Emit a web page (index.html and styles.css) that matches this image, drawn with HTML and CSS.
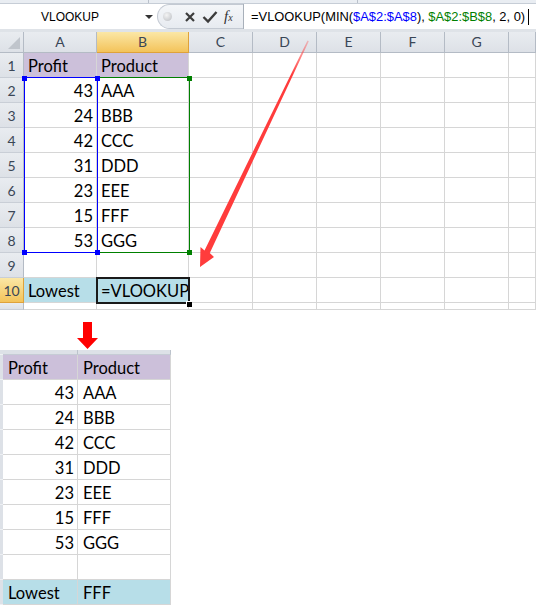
FILE: index.html
```html
<!DOCTYPE html>
<html lang="en">
<head>
    <meta charset="UTF-8">
    <meta name="viewport" content="width=device-width, initial-scale=1.0">
    <title>VLOOKUP lowest value</title>
    <link rel="stylesheet" href="styles.css">
</head>
<body>
    <div class="shot-top">
        <div class="ribbon-edge">
            <div class="rib rib1"></div>
            <div class="rib rib2"></div>
        </div>
        <div class="formula-bar">
            <div class="name-box">
                <span class="name">VLOOKUP</span>
                <span class="caret"></span>
            </div>
            <div class="fx-buttons">
                <span class="dot"></span>
                <svg class="btn" width="14" height="14" viewBox="0 0 14 14"><path d="M3 3 L11 11 M11 3 L3 11" stroke="#3c3c3c" stroke-width="2.2" fill="none"/></svg>
                <svg class="btn" width="16" height="14" viewBox="0 0 16 14"><path d="M1.5 7 L6 11.5 L14.5 2" stroke="#3c3c3c" stroke-width="2.4" fill="none"/></svg>
                <span class="fx"><i>f</i><small>x</small></span>
            </div>
            <div class="formula">=VLOOKUP(MIN(<span class="ref-a">$A$2:$A$8</span>), <span class="ref-b">$A$2:$B$8</span>, 2, 0)<span class="cursor"></span></div>
        </div>
        <div class="bar-gap"></div>

        <div class="grid">
            <div class="ch corner"><span class="tri"></span></div><div class="ch">A</div><div class="ch sel">B</div><div class="ch">C</div><div class="ch">D</div><div class="ch">E</div><div class="ch">F</div><div class="ch">G</div><div class="ch"></div>

            <div class="rh">1</div><div class="hd">Profit</div><div class="hd">Product</div><div></div><div></div><div></div><div></div><div></div><div></div>
            <div class="rh">2</div><div class="num">43</div><div>AAA</div><div></div><div></div><div></div><div></div><div></div><div></div>
            <div class="rh">3</div><div class="num">24</div><div>BBB</div><div></div><div></div><div></div><div></div><div></div><div></div>
            <div class="rh">4</div><div class="num">42</div><div>CCC</div><div></div><div></div><div></div><div></div><div></div><div></div>
            <div class="rh">5</div><div class="num">31</div><div>DDD</div><div></div><div></div><div></div><div></div><div></div><div></div>
            <div class="rh">6</div><div class="num">23</div><div>EEE</div><div></div><div></div><div></div><div></div><div></div><div></div>
            <div class="rh">7</div><div class="num">15</div><div>FFF</div><div></div><div></div><div></div><div></div><div></div><div></div>
            <div class="rh">8</div><div class="num">53</div><div>GGG</div><div></div><div></div><div></div><div></div><div></div><div></div>
            <div class="rh">9</div><div></div><div></div><div></div><div></div><div></div><div></div><div></div><div></div>
            <div class="rh sel">10</div><div class="lo">Lowest</div><div class="lo">=VLOOKUP</div><div></div><div></div><div></div><div></div><div></div><div></div>
            <div class="rh"></div><div></div><div></div><div></div><div></div><div></div><div></div><div></div><div></div>

            <!-- range highlights of the formula being edited -->
            <span class="range range-b"></span>
            <span class="range range-a"></span>
            <span class="knob green" style="left: 187px; top: 44px;"></span>
            <span class="knob green" style="left: 187px; top: 218px;"></span>
            <span class="knob blue" style="left: 22px; top: 44px;"></span>
            <span class="knob blue" style="left: 95px; top: 44px;"></span>
            <span class="knob blue" style="left: 22px; top: 218px;"></span>
            <span class="knob blue" style="left: 95px; top: 218px;"></span>
            <span class="active-cell"></span>
            <span class="fill-handle"></span>
        </div>

        <svg class="pointer" width="536" height="310" viewBox="0 0 536 310">
            <defs>
                <linearGradient id="fade" x1="308" y1="41" x2="200" y2="267" gradientUnits="userSpaceOnUse">
                    <stop offset="0" stop-color="#ff3c3c" stop-opacity="0.3"/>
                    <stop offset="0.15" stop-color="#ff3c3c"/>
                    <stop offset="1" stop-color="#ff3c3c"/>
                </linearGradient>
            </defs>
            <polygon points="307.5,40.5 308.8,41.2 209.8,253 214,257 200,267 200.5,247 204.5,250.5" fill="url(#fade)"/>
        </svg>
    </div>

    <div class="shot-bottom">
        <svg class="down" width="22" height="28" viewBox="0 0 22 28">
            <polygon points="6,0 15,0 15,16 21,16 10.5,27 0,16 6,16" fill="#ff0000"/>
        </svg>
        <div class="result">
            <div class="edge"></div><div class="top"></div><div class="top"></div>
            <div class="edge"></div><div class="hd">Profit</div><div class="hd">Product</div>
            <div class="edge"></div><div class="num">43</div><div>AAA</div>
            <div class="edge"></div><div class="num">24</div><div>BBB</div>
            <div class="edge"></div><div class="num">42</div><div>CCC</div>
            <div class="edge"></div><div class="num">31</div><div>DDD</div>
            <div class="edge"></div><div class="num">23</div><div>EEE</div>
            <div class="edge"></div><div class="num">15</div><div>FFF</div>
            <div class="edge"></div><div class="num">53</div><div>GGG</div>
            <div class="edge"></div><div></div><div></div>
            <div class="edge"></div><div class="lo">Lowest</div><div class="lo">FFF</div>
        </div>
    </div>
</body>
</html>
```

FILE: styles.css
```css
body {
    margin: 0;
    width: 536px;
    height: 605px;
    overflow: hidden;
    background: #ffffff;
    font-family: Lato, "Liberation Sans", sans-serif;
    color: #000000;
}

/* ---------- top screenshot: Excel while editing ---------- */
.shot-top {
    position: relative;
    height: 310px;
    overflow: hidden;
}

.ribbon-edge {
    display: flex;
    height: 4px;
    background: #e9edf2;
    border-bottom: 1px solid #c6cdd6;
    box-sizing: border-box;
}

.rib {
    height: 100%;
    border-right: 1px solid #b9c0ca;
}

.rib1 { width: 148px; }
.rib2 { width: 208px; }

.formula-bar {
    display: flex;
    height: 25px;
    background: #ffffff;
}

.name-box {
    width: 157px;
    display: flex;
    align-items: center;
    font-family: "Liberation Sans", Arial, sans-serif;
    font-size: 12px;
}

.name-box .name {
    width: 140px;
    text-align: center;
    padding-right: 2px;
}

.name-box .caret {
    width: 0;
    height: 0;
    border-left: 4px solid transparent;
    border-right: 4px solid transparent;
    border-top: 4px solid #333333;
    margin-left: 3px;
}

.fx-buttons {
    width: 86px;
    display: flex;
    align-items: center;
    gap: 5px;
    background: linear-gradient(#f4f6f9, #e7ebf0);
    border: 1px solid #c3c9d2;
    border-right: none;
    border-radius: 13px 0 0 13px;
    box-sizing: border-box;
    padding-left: 5px;
}

.dot {
    width: 9px;
    height: 9px;
    border-radius: 50%;
    background: radial-gradient(circle at 40% 35%, #f4f4f4, #b9bcc1);
    margin-right: 6px;
}

.btn { display: block; }

.fx {
    font-family: "Liberation Serif", serif;
    font-size: 15px;
    color: #333333;
    margin-left: 1px;
}

.fx small { font-size: 10px; font-style: italic; }

.formula {
    flex: 1;
    display: flex;
    align-items: center;
    border-left: 1px solid #a8b0ba;
    padding-left: 7px;
    font-family: "Liberation Sans", Arial, sans-serif;
    font-size: 12.9px;
    white-space: pre;
}

.ref-a { color: #0000ff; }
.ref-b { color: #008000; }

.cursor {
    width: 1px;
    height: 16px;
    background: #000000;
    margin-left: 3px;
}

.bar-gap {
    height: 3px;
    background: #dfe3e8;
}

.grid {
    display: grid;
    grid-template-columns: 24px 73px 92px 64px 64px 64px 64px 64px 1fr;
    grid-template-rows: 21px repeat(10, 25px) 7px;
    position: relative;
}

.grid > div {
    border-right: 1px solid #d6d6d6;
    border-bottom: 1px solid #d6d6d6;
    box-sizing: border-box;
    padding: 0 3px 0 4px;
    font-size: 16.5px;
    line-height: 26px;
    white-space: nowrap;
    overflow: hidden;
}

.grid > .ch,
.grid > .rh {
    background: linear-gradient(#e9ecf0, #dde1e7);
    border-color: #b4bbc5;
    color: #3a4656;
    font-size: 14px;
    text-align: center;
    padding: 0;
}

.grid > .ch { line-height: 20px; }
.grid > .rh { line-height: 26px; border-bottom-color: #c9ced6; }

.grid > .sel {
    background: linear-gradient(#fbe7a6, #f3c35a);
    border-color: #dfa23a;
}

.corner {
    position: relative;
}

.tri {
    position: absolute;
    right: 3px;
    bottom: 3px;
    width: 0;
    height: 0;
    border-left: 12px solid transparent;
    border-bottom: 12px solid #c0c5cc;
}

.grid > .num,
.result > .num { text-align: right; }

.hd { background: #ccc0da; }
.lo { background: #b7dee8; }

.range {
    position: absolute;
    top: 45px;
    height: 176px;
    box-sizing: border-box;
}

.range-a {
    left: 24px;
    width: 74px;
    border: 1px solid #0000ff;
}

.range-b {
    left: 97px;
    width: 93px;
    border: 1px solid #008000;
}

.knob {
    position: absolute;
    width: 5px;
    height: 5px;
}

.knob.blue { background: #0000ff; }
.knob.green { background: #008000; }

.active-cell {
    position: absolute;
    left: 96px;
    top: 245px;
    width: 94px;
    height: 27px;
    border: 2px solid #1a1a1a;
    box-sizing: border-box;
}

.fill-handle {
    position: absolute;
    left: 186px;
    top: 269px;
    width: 6px;
    height: 6px;
    background: #000000;
    border: 1px solid #ffffff;
    border-right: none;
    border-bottom: none;
    box-sizing: border-box;
}

.pointer {
    position: absolute;
    left: 0;
    top: 0;
    pointer-events: none;
}

/* ---------- bottom screenshot: result ---------- */
.shot-bottom {
    height: 295px;
    position: relative;
}

.down {
    position: absolute;
    left: 77px;
    top: 12px;
}

.result {
    position: absolute;
    left: 0;
    top: 40px;
    display: grid;
    grid-template-columns: 3px 75px 93px;
    grid-template-rows: 5px repeat(10, 25px);
}

.result > div {
    border-right: 1px solid #d6d6d6;
    border-bottom: 1px solid #d6d6d6;
    box-sizing: border-box;
    padding: 0 3px 0 5px;
    font-size: 16.5px;
    line-height: 26px;
    white-space: nowrap;
}

.result > .edge {
    background: #dde1e7;
    border-right: none;
    border-bottom-color: #eef0f3;
    padding: 0;
}

.result > .top {
    background: #dde1e7;
    border-right-color: #bcc3cc;
    border-bottom-color: #c6ccd5;
}
```
